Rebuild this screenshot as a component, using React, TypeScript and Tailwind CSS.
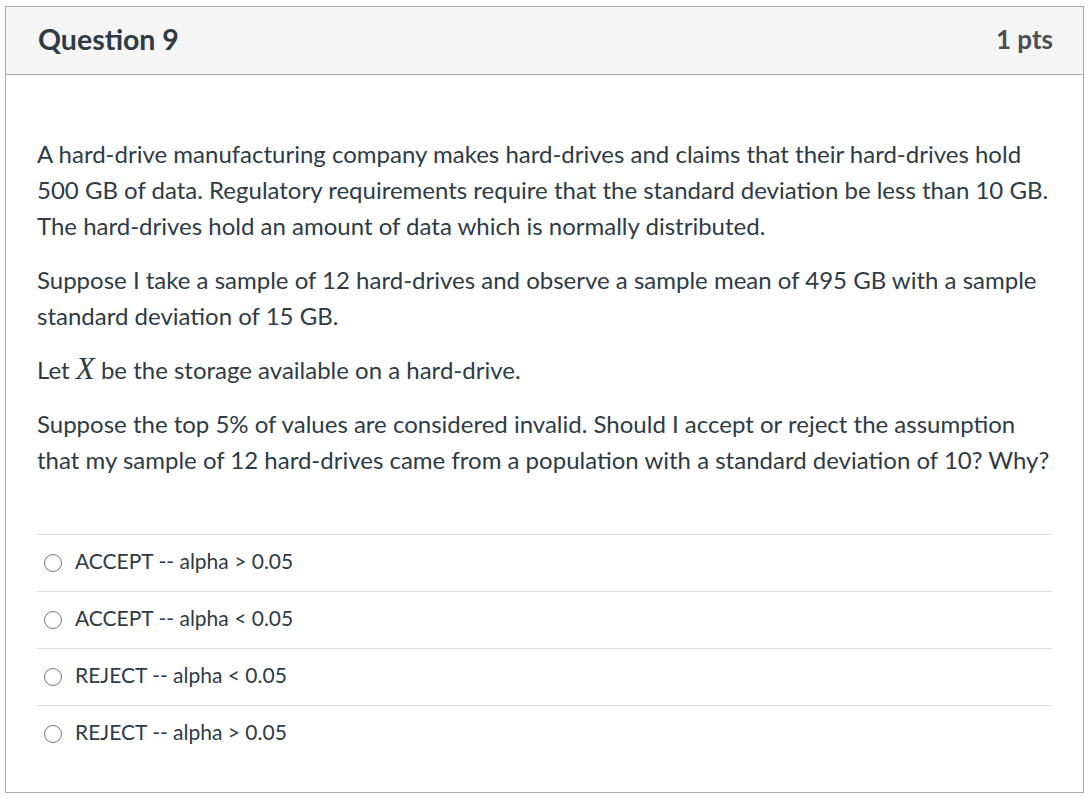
export default function App() {
  const answers = [
    'ACCEPT -- alpha > 0.05',
    'ACCEPT -- alpha < 0.05',
    'REJECT -- alpha < 0.05',
    'REJECT -- alpha > 0.05',
  ];

  return (
    <div className="min-h-screen bg-white pl-[5px] pt-[6px] font-['Lato','Liberation_Sans',sans-serif] text-[#2d3b45]">
      <div className="w-[1079px] border border-[#aaaaaa]">
        <div className="flex h-[68px] items-center justify-between border-b border-[#aaaaaa] bg-[#f5f5f5] pb-[3px] pl-[32px] pr-[30px]">
          <h2 className="text-[28.5px] font-bold">Question 9</h2>
          <span className="text-[26px] font-bold text-[#4a4f54]">1 pts</span>
        </div>

        <div className="px-[31px] pb-[30px] pt-[61px]">
          <div className="space-y-[18px] text-[24px] leading-[36px]">
            <p>
              A hard-drive manufacturing company makes hard-drives and claims that their hard-drives hold
              500 GB of data. Regulatory requirements require that the standard deviation be less than 10 GB.
              The hard-drives hold an amount of data which is normally distributed.
            </p>
            <p>
              Suppose I take a sample of 12 hard-drives and observe a sample mean of 495 GB with a sample
              standard deviation of 15 GB.
            </p>
            <p>
              Let{' '}
              <span className="font-['Liberation_Serif',serif] text-[31px] leading-none italic">X</span>{' '}
              be the storage available on a hard-drive.
            </p>
            <p>
              Suppose the top 5% of values are considered invalid. Should I accept or reject the assumption
              that my sample of 12 hard-drives came from a population with a standard deviation of 10?
              Why?
            </p>
          </div>

          <div className="mt-[56px]">
            {answers.map((answer) => (
              <label
                key={answer}
                className="flex h-[57px] items-center border-t border-[#dddddd] pb-[5px] pl-[7px] text-[21px]"
              >
                <span className="h-[18px] w-[18px] translate-y-[2px] rounded-full border-[1.5px] border-[#777777]" />
                <span className="ml-[13px]">{answer}</span>
              </label>
            ))}
          </div>
        </div>
      </div>
    </div>
  );
}
